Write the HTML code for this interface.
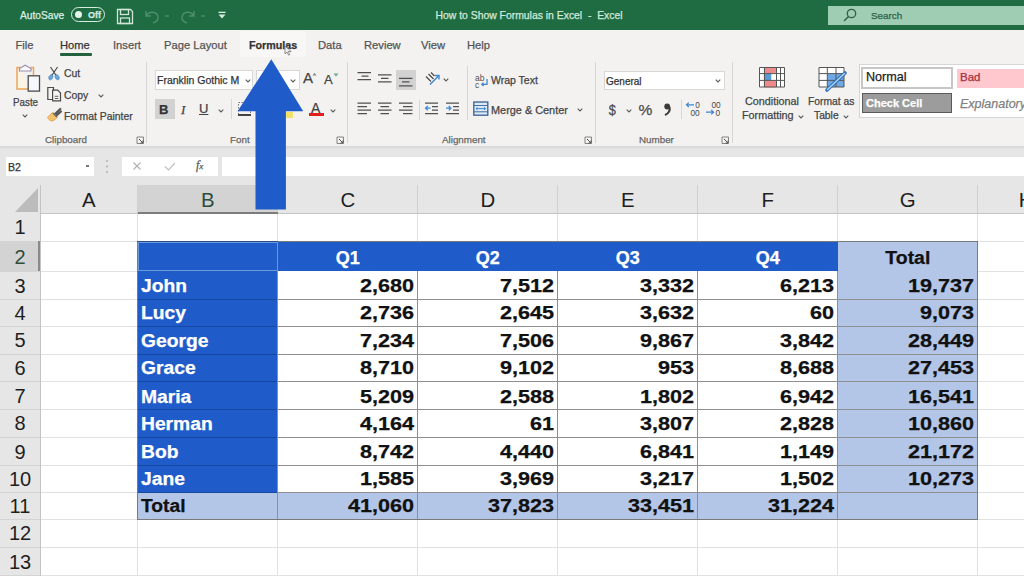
<!DOCTYPE html>
<html><head><meta charset="utf-8"><style>
html,body{margin:0;padding:0;width:1024px;height:576px;overflow:hidden;background:#f3f2f1;font-family:"Liberation Sans",sans-serif}
div,svg{position:absolute;box-sizing:border-box}
.ch{white-space:nowrap}
.d{font-weight:bold;font-size:18px;white-space:nowrap;overflow:hidden}
.d .n{position:absolute;right:3.5px;top:0;display:inline-block;transform:scaleX(1.2);transform-origin:right center}
.tw{display:inline-block;transform:scaleX(1.08)}
.nm{display:inline-block;transform:scaleX(1.07);transform-origin:left center}
.d{-webkit-text-stroke:0.25px currentColor}
.tt,.rt,.tab,.gl{white-space:nowrap;-webkit-text-stroke:0.25px currentColor}
.tab{top:39.1px;font-size:11.2px;color:#555}
.rt{font-size:10.4px;color:#444}
.gl{top:134px;font-size:9.8px;color:#666}
.sep{width:1px;background:#d6d6d6}
.box{background:#fff;border:1px solid #d8d8d8}
</style></head><body>

<!-- title bar -->
<div style="left:0;top:0;width:1024px;height:30px;background:#1f6c42"></div>
<div class="tt" style="left:20px;top:10.2px;font-size:10.2px;color:#dcefe3">AutoSave</div>
<div style="left:71px;top:7.2px;width:33.5px;height:14.8px;border:1.8px solid #d6ece0;border-radius:8px"></div>
<div style="left:74.6px;top:10.8px;width:7.6px;height:7.6px;border-radius:50%;background:#e6f4ea"></div>
<div class="tt" style="left:88px;top:9.6px;font-size:9px;font-weight:bold;color:#d6ece0">Off</div>
<svg style="left:116px;top:8px" width="18" height="17" viewBox="0 0 18 17"><path d="M1.5 1.5h13l2 2v12h-15z" fill="none" stroke="#cfe6d8" stroke-width="1.3"/><rect x="4.5" y="1.5" width="8" height="5" fill="none" stroke="#cfe6d8" stroke-width="1.3"/><rect x="4.5" y="10" width="9" height="5.5" fill="none" stroke="#cfe6d8" stroke-width="1.3"/></svg>
<svg style="left:144px;top:8px" width="66" height="16" viewBox="0 0 66 16"><path d="M2 3v5h5 M2.5 7.5 C5 3 13 3 14 9 C14.5 12 12 14 9 15" fill="none" stroke="#4f8f6b" stroke-width="1.4"/><path d="M21 8h4" stroke="#4f8f6b" stroke-width="1.2"/><path d="M50 3v5h-5 M49.5 7.5 C47 3 39 3 38 9 C37.5 12 40 14 43 15" fill="none" stroke="#4f8f6b" stroke-width="1.4"/><path d="M57 8h4" stroke="#4f8f6b" stroke-width="1.2"/></svg>
<svg style="left:217px;top:11px" width="10" height="9" viewBox="0 0 10 9"><rect x="1.5" y="0.7" width="7" height="1.3" fill="#d6ece0"/><path d="M1.5 3.5h7l-3.5 4z" fill="#d6ece0"/></svg>
<div class="tt" style="left:435.5px;top:9.5px;font-size:10.4px;color:#d2eadb">How to Show Formulas in Excel &nbsp;- &nbsp;Excel</div>
<div style="left:828px;top:5.5px;width:196px;height:19px;background:#9fcdb3"></div>
<svg style="left:842px;top:8px" width="16" height="14" viewBox="0 0 16 14"><circle cx="9.5" cy="5.5" r="4.2" fill="none" stroke="#2f5f44" stroke-width="1.3"/><path d="M6.5 8.5 L2 13" stroke="#2f5f44" stroke-width="1.5"/></svg>
<div class="tt" style="left:871px;top:10.4px;font-size:9.9px;color:#2f5f44">Search</div>
<!-- tabs -->
<div style="left:0;top:30px;width:1024px;height:116px;background:#f3f2f1"></div>
<div class="tab" style="left:15.5px">File</div>
<div class="tab" style="left:60px;color:#333">Home</div>
<div style="left:60px;top:53px;width:32px;height:3px;background:#24613f;border-radius:1px"></div>
<div class="tab" style="left:113px">Insert</div>
<div class="tab" style="left:164px">Page Layout</div>
<div style="left:240px;top:31px;width:66px;height:26px;background:#f8f7f6"></div>
<div class="tab" style="left:249px;font-weight:bold;color:#333;font-size:10.7px;top:38.6px">Formulas</div>
<div class="tab" style="left:318px">Data</div>
<div class="tab" style="left:364px">Review</div>
<div class="tab" style="left:421px">View</div>
<div class="tab" style="left:467px">Help</div>
<!-- ribbon shadow -->
<div style="left:0;top:146px;width:1024px;height:4px;background:linear-gradient(#d6d6d6,#e6e6e6)"></div>

<!-- clipboard group -->
<svg style="left:10px;top:60px" width="34" height="34" viewBox="10 60 34 34"><path d="M20.5 67.5 H17 V89 H28" fill="#fdf3e3" stroke="#e9a75a" stroke-width="1.5"/><path d="M30.5 67.5 H33.5 V75" fill="none" stroke="#e9a75a" stroke-width="1.5"/><path d="M19.5 71 V68.5 L25.2 65.3 L31 68.5 V71 Z" fill="#fbfbfd" stroke="#9d8fb3" stroke-width="1.2"/><rect x="28.2" y="75.8" width="11.3" height="15.3" fill="#f7f8fb" stroke="#4a4a4a" stroke-width="1.3"/></svg>
<div class="rt" style="left:13px;top:96.3px;font-size:11.4px;transform:scaleX(0.86);transform-origin:left center">Paste</div>
<svg class="chev" style="left:22.0px;top:113.5px" width="6" height="4" viewBox="0 0 6 4"><path d="M0.7 0.7l2.3 2.3 2.3-2.3" fill="none" stroke="#5a5a5a" stroke-width="1.1"/></svg>
<svg style="left:46px;top:65px" width="16" height="17" viewBox="46 65 16 17"><path d="M50.5 67 L56.5 76 M57.5 67 L51.5 76" stroke="#4a4a4a" stroke-width="1.2" fill="none"/><path d="M51.5 74.5 C49 75.5 48 78 49.5 79.7 C51 80.3 53 78.5 53 75.8 Z" fill="#6aa5dc" stroke="#4a87c2" stroke-width="0.8"/><path d="M56.5 74.5 C59 75.5 60 78 58.5 79.7 C57 80.3 55 78.5 55 75.8 Z" fill="#6aa5dc" stroke="#4a87c2" stroke-width="0.8"/></svg>
<div class="rt" style="left:64px;top:67.8px">Cut</div>
<svg style="left:46px;top:85px" width="17" height="18" viewBox="46 85 17 18"><path d="M47.8 87.5 H53.5 V99.5 H47.8 Z" fill="none" stroke="#4a4a4a" stroke-width="1.2"/><path d="M52.6 90.2 H57.8 L60.5 93 V100.8 H52.6 Z" fill="#f5f5f5" stroke="#4a4a4a" stroke-width="1.2"/><path d="M54.8 96.3 H58.3 M54.8 98.5 H58.3" stroke="#4a4a4a" stroke-width="0.9"/></svg>
<div class="rt" style="left:64px;top:89.9px">Copy</div>
<svg class="chev" style="left:98.0px;top:93.5px" width="6" height="4" viewBox="0 0 6 4"><path d="M0.7 0.7l2.3 2.3 2.3-2.3" fill="none" stroke="#5a5a5a" stroke-width="1.1"/></svg>
<svg style="left:46px;top:107px" width="17" height="16" viewBox="46 107 17 16"><path d="M55.5 113.5 L60.3 109 M57 115 L61 111.5" stroke="#555" stroke-width="2.2" stroke-linecap="round"/><path d="M52.5 112.5 L57.5 117.3 L52.8 121 C50.5 121 48.2 119.5 47.5 117.3 Z" fill="#f3c36b" stroke="#e3a04a" stroke-width="0.9"/><path d="M53 113 L57 117" stroke="#666" stroke-width="1.6"/></svg>
<div class="rt" style="left:64px;top:111.1px">Format Painter</div>
<div class="gl" style="left:45px">Clipboard</div>
<svg class="dl" style="left:136px;top:136px" width="9" height="9" viewBox="0 0 9 9"><path d="M1 1h6.5v6.5h-6.5z" fill="none" stroke="#777" stroke-width="0.9"/><path d="M3 3l4 4 M4.5 7h2.5v-2.5" fill="none" stroke="#555" stroke-width="1"/></svg>
<div class="sep" style="left:145.5px;top:62px;height:81px"></div>
<!-- font group -->
<div class="box" style="left:154.5px;top:70px;width:98px;height:20px"></div>
<div class="rt" style="left:157px;top:73.8px;font-size:10.5px;color:#333">Franklin Gothic M</div>
<svg class="chev" style="left:245.0px;top:78.5px" width="6" height="4" viewBox="0 0 6 4"><path d="M0.7 0.7l2.3 2.3 2.3-2.3" fill="none" stroke="#5a5a5a" stroke-width="1.1"/></svg>
<div class="box" style="left:255.5px;top:70px;width:44px;height:20px"></div>
<svg class="chev" style="left:290.0px;top:78.5px" width="6" height="4" viewBox="0 0 6 4"><path d="M0.7 0.7l2.3 2.3 2.3-2.3" fill="none" stroke="#5a5a5a" stroke-width="1.1"/></svg>
<div class="rt" style="left:303px;top:69px;font-size:15px;color:#444">A</div>
<svg style="left:312px;top:72px" width="5" height="4" viewBox="0 0 5 4"><path d="M0.5 3.5 L2.5 0.8 L4.5 3.5z" fill="#8a8a8a"/></svg>
<div class="rt" style="left:324px;top:72px;font-size:13px;color:#444">A</div>
<svg style="left:333px;top:73px" width="6" height="4" viewBox="0 0 6 4"><path d="M0.5 0.5 L5.5 0.5 L3 3.5z" fill="#6aa88a"/></svg>
<div style="left:154.5px;top:99px;width:20px;height:20px;background:#d2d2d2"></div>
<div class="rt" style="left:159px;top:102px;font-size:13px;font-weight:bold;color:#333">B</div>
<div class="rt" style="left:181px;top:102px;font-size:13px;font-style:italic;color:#444;font-family:'Liberation Serif',serif">I</div>
<div class="rt" style="left:199px;top:101px;font-size:13px;color:#444;text-decoration:underline">U</div>
<svg class="chev" style="left:218.0px;top:108.5px" width="6" height="4" viewBox="0 0 6 4"><path d="M0.7 0.7l2.3 2.3 2.3-2.3" fill="none" stroke="#5a5a5a" stroke-width="1.1"/></svg>
<div class="sep" style="left:231px;top:99px;height:20px"></div>
<svg style="left:237px;top:101px" width="16" height="16" viewBox="0 0 16 16"><rect x="1.5" y="1.5" width="12" height="12" fill="none" stroke="#777" stroke-width="1" stroke-dasharray="1.5 1.5"/><path d="M1 14h13" stroke="#444" stroke-width="2"/></svg>
<svg style="left:286px;top:112px" width="7" height="6"><rect x="0" y="0" width="7" height="6" fill="#f2e26a"/></svg>
<div class="rt" style="left:311px;top:100px;font-size:14px;color:#444">A</div>
<div style="left:309px;top:113px;width:15px;height:3px;background:#e0201a"></div>
<svg class="chev" style="left:330.0px;top:108.5px" width="6" height="4" viewBox="0 0 6 4"><path d="M0.7 0.7l2.3 2.3 2.3-2.3" fill="none" stroke="#5a5a5a" stroke-width="1.1"/></svg>
<div class="gl" style="left:230px">Font</div>
<svg class="dl" style="left:336px;top:136px" width="9" height="9" viewBox="0 0 9 9"><path d="M1 1h6.5v6.5h-6.5z" fill="none" stroke="#777" stroke-width="0.9"/><path d="M3 3l4 4 M4.5 7h2.5v-2.5" fill="none" stroke="#555" stroke-width="1"/></svg>
<div class="sep" style="left:347px;top:62px;height:81px"></div>
<!-- alignment group -->
<div style="left:395.7px;top:69.6px;width:20px;height:20px;background:#d2d2d2"></div>
<svg style="left:350px;top:62px" width="145" height="60" viewBox="350 62 145 60"><g stroke="#505050" stroke-width="1.25" fill="none">
<path d="M357.5 72.6h13.5 M361.5 76.1h7 M357.5 79.6h13.5"/>
<path d="M378 74.9h13.5 M381 78.4h7.5 M378 81.9h13.5"/>
<path d="M399 78.4h13.5 M402 81.9h7.5 M399 85.9h13.5"/>
<path d="M357.5 103h13.5 M357.5 106.5h9.5 M357.5 110h13.5 M357.5 113.5h9.5"/>
<path d="M378 103h13.5 M380.5 106.5h8.5 M378 110h13.5 M380.5 113.5h8.5"/>
<path d="M399 103h13.5 M403 106.5h9.5 M399 110h13.5 M403 113.5h9.5"/>
<path d="M425 103h13 M432 106.5h6 M432 110h6 M425 113.5h13"/>
<path d="M446 103h13 M453 106.5h6 M453 110h6 M446 113.5h13"/>
<path d="M426 76.5 L431 81.5 M428.5 74 L433.5 79 M431 72.5 L434.5 76" stroke-width="1.3"/>
</g>
<path d="M430.5 108.2h-5 M427.8 106l-2.3 2.2 2.3 2.2" stroke="#3d86d2" stroke-width="1.2" fill="none"/>
<path d="M446 108.2h5 M448.7 106l2.3 2.2 -2.3 2.2" stroke="#3d86d2" stroke-width="1.2" fill="none"/>
<path d="M430 84.5 L438.5 76 M435 75.5h4v4" stroke="#3d86d2" stroke-width="1.4" fill="none"/>
<text x="475" y="80.5" font-size="8.5" font-family="Liberation Sans" fill="#505050">ab</text><text x="475" y="88" font-size="8.5" font-family="Liberation Sans" fill="#505050">c</text><path d="M487 79v5.3h-5 M483.6 82.6l-1.8 1.7 1.8 1.7" stroke="#3d86d2" stroke-width="1.3" fill="none"/>
<rect x="473.8" y="102" width="14" height="13.2" fill="#dbe9f8" stroke="#3a5f94" stroke-width="1.3"/>
<path d="M473.8 105.5h14 M473.8 111.8h14" stroke="#3a5f94" stroke-width="0.9"/>
<path d="M476 108.6h9.5 M484 107.3l1.5 1.3-1.5 1.3 M477.5 107.3l-1.5 1.3 1.5 1.3" stroke="#3d86d2" stroke-width="1" fill="none"/>
</svg>
<div class="sep" style="left:419px;top:99.5px;height:20px"></div>
<svg class="chev" style="left:443.0px;top:77.5px" width="6" height="4" viewBox="0 0 6 4"><path d="M0.7 0.7l2.3 2.3 2.3-2.3" fill="none" stroke="#5a5a5a" stroke-width="1.1"/></svg>
<div class="sep" style="left:466.5px;top:66px;height:54px"></div>
<div class="rt" style="left:491px;top:74.2px;font-size:10.5px">Wrap Text</div>

<div class="rt" style="left:491px;top:103.5px;font-size:10.9px">Merge &amp; Center</div>
<svg class="chev" style="left:577.0px;top:107.5px" width="6" height="4" viewBox="0 0 6 4"><path d="M0.7 0.7l2.3 2.3 2.3-2.3" fill="none" stroke="#5a5a5a" stroke-width="1.1"/></svg>
<div class="gl" style="left:442px">Alignment</div>
<svg class="dl" style="left:584px;top:136px" width="9" height="9" viewBox="0 0 9 9"><path d="M1 1h6.5v6.5h-6.5z" fill="none" stroke="#777" stroke-width="0.9"/><path d="M3 3l4 4 M4.5 7h2.5v-2.5" fill="none" stroke="#555" stroke-width="1"/></svg>
<div class="sep" style="left:595px;top:62px;height:81px"></div>
<!-- number group -->
<div class="box" style="left:603.5px;top:70.5px;width:121px;height:19px"></div>
<div class="rt" style="left:606px;top:76px;font-size:10px;color:#333">General</div>
<svg class="chev" style="left:715.0px;top:78.5px" width="6" height="4" viewBox="0 0 6 4"><path d="M0.7 0.7l2.3 2.3 2.3-2.3" fill="none" stroke="#5a5a5a" stroke-width="1.1"/></svg>
<div class="rt" style="left:607.5px;top:101px;font-size:15px;color:#4a4a4a;transform:scaleX(0.85)">$</div>
<svg class="chev" style="left:626.0px;top:108.5px" width="6" height="4" viewBox="0 0 6 4"><path d="M0.7 0.7l2.3 2.3 2.3-2.3" fill="none" stroke="#5a5a5a" stroke-width="1.1"/></svg>
<div class="rt" style="left:638.5px;top:101px;font-size:15.5px;color:#4a4a4a">%</div>
<svg style="left:662px;top:102px" width="10" height="14" viewBox="662 102 10 14"><circle cx="667.2" cy="106.5" r="2.9" fill="#3a3a3a"/><path d="M669.6 107 C670.3 110.5 668.5 113.5 665 115" stroke="#3a3a3a" stroke-width="2" fill="none"/></svg>
<div class="sep" style="left:681px;top:100px;height:19px"></div>
<svg style="left:684px;top:100px" width="19" height="17" viewBox="684 100 19 17"><text x="695.2" y="108.2" font-size="8.3" font-family="Liberation Sans" fill="#4a4a4a">0</text><text x="690.5" y="115.6" font-size="8.3" font-family="Liberation Sans" fill="#4a4a4a">00</text><path d="M694 104.8h-7.5 M688.8 102.6l-2.3 2.2 2.3 2.2" stroke="#3d86d2" stroke-width="1.2" fill="none"/></svg>
<svg style="left:704px;top:100px" width="19" height="17" viewBox="704 100 19 17"><text x="711.5" y="108.2" font-size="8.3" font-family="Liberation Sans" fill="#4a4a4a">00</text><text x="715.5" y="115.6" font-size="8.3" font-family="Liberation Sans" fill="#4a4a4a">0</text><path d="M706 112.2h7.5 M711.2 110l2.3 2.2 -2.3 2.2" stroke="#3d86d2" stroke-width="1.2" fill="none"/></svg>
<div class="gl" style="left:639px">Number</div>
<svg class="dl" style="left:721px;top:136px" width="9" height="9" viewBox="0 0 9 9"><path d="M1 1h6.5v6.5h-6.5z" fill="none" stroke="#777" stroke-width="0.9"/><path d="M3 3l4 4 M4.5 7h2.5v-2.5" fill="none" stroke="#555" stroke-width="1"/></svg>
<div class="sep" style="left:731.5px;top:62px;height:81px"></div>
<!-- styles group -->
<svg style="left:758px;top:66px" width="28" height="23" viewBox="758 66 28 23"><rect x="764.5" y="67" width="12" height="6.4" fill="#ef8a8a"/><rect x="764.5" y="80.4" width="12" height="7" fill="#ef8a8a"/><rect x="764.5" y="73.4" width="7" height="7" fill="#5b9bd5"/><rect x="771.5" y="73.4" width="5" height="7" fill="#fff"/><rect x="759.5" y="67.5" width="3" height="19.5" fill="#fff"/><rect x="777" y="67.5" width="7" height="19.5" fill="#fff"/><path d="M759.5 67.5h25v19.5h-25z M759.5 73.6h25 M759.5 80.4h25 M764.5 67.5v19.5 M776.5 67.5v19.5 M780.5 67.5v19.5" fill="none" stroke="#555" stroke-width="1"/></svg>
<div class="rt" style="left:745px;top:95.1px;font-size:10.8px">Conditional</div>
<div class="rt" style="left:742px;top:109.2px;font-size:10.8px">Formatting</div>
<svg class="chev" style="left:798px;top:114.5px" width="6" height="4" viewBox="0 0 6 4"><path d="M0.7 0.7l2.3 2.3 2.3-2.3" fill="none" stroke="#5a5a5a" stroke-width="1.1"/></svg>
<svg style="left:816px;top:65px" width="32" height="28" viewBox="816 65 32 28"><rect x="819" y="67.5" width="25" height="19.5" fill="#fff"/><rect x="827.3" y="73.6" width="16.7" height="13.4" fill="#6fa8e6"/><path d="M819 67.5h25v19.5h-25z M819 73.6h25 M819 80.4h25 M827.3 67.5v19.5 M836 67.5v19.5" fill="none" stroke="#555" stroke-width="1"/><path d="M827 90 L845 73" stroke="#2f6fb8" stroke-width="3.6" stroke-linecap="round"/><path d="M827.5 89.5 L844.5 73.5" stroke="#a9d3f5" stroke-width="1.6" stroke-linecap="round"/></svg>
<div class="rt" style="left:808px;top:96.1px;font-size:10.3px">Format as</div>
<div class="rt" style="left:814px;top:110.4px;font-size:10.3px">Table</div>
<svg class="chev" style="left:843px;top:114.5px" width="6" height="4" viewBox="0 0 6 4"><path d="M0.7 0.7l2.3 2.3 2.3-2.3" fill="none" stroke="#5a5a5a" stroke-width="1.1"/></svg>
<div style="left:859px;top:64px;width:170px;height:54px;background:#fff;border:1px solid #d6d6d6"></div>
<div style="left:861px;top:67px;width:92px;height:22px;background:#fff;border:2px solid #c6c6c6"></div>
<div class="rt" style="left:866px;top:70.2px;font-size:12.6px;color:#222">Normal</div>
<div style="left:956.5px;top:68.5px;width:70px;height:19.5px;background:#ffc7ce"></div>
<div class="rt" style="left:960px;top:71px;font-size:11.5px;color:#a3303c">Bad</div>
<div style="left:862px;top:93px;width:90px;height:20px;background:#9c9c9c;border:1.5px solid #5a5a5a"></div>
<div class="rt" style="left:866px;top:97px;font-size:11px;font-weight:bold;color:#fff">Check Cell</div>
<div class="rt" style="left:960px;top:96.5px;font-size:12.5px;font-style:italic;color:#808080">Explanatory</div>
<!-- formula bar -->
<div style="left:0;top:150px;width:1024px;height:35px;background:#e6e6e6"></div>
<div style="left:5.5px;top:157px;width:88px;height:19px;background:#fff"></div>
<div class="rt" style="left:8px;top:161.1px;font-size:10.6px;color:#333">B2</div>
<div style="left:86px;top:165px;width:3px;height:2px;background:#777"></div>
<svg style="left:105px;top:159px" width="4" height="15"><circle cx="2" cy="2" r="0.9" fill="#aaa"/><circle cx="2" cy="7.5" r="0.9" fill="#aaa"/><circle cx="2" cy="13" r="0.9" fill="#aaa"/></svg>
<div style="left:122px;top:157.3px;width:96px;height:18.5px;background:#fff"></div>
<svg style="left:131px;top:160px" width="12" height="12" viewBox="0 0 12 12"><path d="M2.5 2.5l7 7 M9.5 2.5l-7 7" stroke="#b0b0b0" stroke-width="1.1"/></svg>
<svg style="left:163px;top:160px" width="14" height="12" viewBox="0 0 14 12"><path d="M2 6.5l3.5 3.5 6.5-7" fill="none" stroke="#c0c0c0" stroke-width="1.2"/></svg>
<div class="rt" style="left:196px;top:158px;font-size:12px;font-style:italic;color:#555;font-family:'Liberation Serif',serif">f<span style="font-size:9px">x</span></div>
<div style="left:222.3px;top:157.3px;width:802px;height:18.5px;background:#fff"></div>
<div style="left:40px;top:213.3px;width:984px;height:362.7px;background:#fff"></div>
<div style="left:137.3px;top:213px;width:1px;height:363px;background:#e1e1e1"></div>
<div style="left:277.3px;top:213px;width:1px;height:363px;background:#e1e1e1"></div>
<div style="left:417.3px;top:213px;width:1px;height:363px;background:#e1e1e1"></div>
<div style="left:557.3px;top:213px;width:1px;height:363px;background:#e1e1e1"></div>
<div style="left:697.3px;top:213px;width:1px;height:363px;background:#e1e1e1"></div>
<div style="left:837.3px;top:213px;width:1px;height:363px;background:#e1e1e1"></div>
<div style="left:977.3px;top:213px;width:1px;height:363px;background:#e1e1e1"></div>
<div style="left:40px;top:240.5px;width:984px;height:1px;background:#e1e1e1"></div>
<div style="left:40px;top:270.5px;width:984px;height:1px;background:#e1e1e1"></div>
<div style="left:40px;top:298.5px;width:984px;height:1px;background:#e1e1e1"></div>
<div style="left:40px;top:326.0px;width:984px;height:1px;background:#e1e1e1"></div>
<div style="left:40px;top:353.5px;width:984px;height:1px;background:#e1e1e1"></div>
<div style="left:40px;top:381.0px;width:984px;height:1px;background:#e1e1e1"></div>
<div style="left:40px;top:409.0px;width:984px;height:1px;background:#e1e1e1"></div>
<div style="left:40px;top:436.5px;width:984px;height:1px;background:#e1e1e1"></div>
<div style="left:40px;top:464.5px;width:984px;height:1px;background:#e1e1e1"></div>
<div style="left:40px;top:491.5px;width:984px;height:1px;background:#e1e1e1"></div>
<div style="left:40px;top:519.0px;width:984px;height:1px;background:#e1e1e1"></div>
<div style="left:40px;top:546.5px;width:984px;height:1px;background:#e1e1e1"></div>
<div style="left:40px;top:574.5px;width:984px;height:1px;background:#e1e1e1"></div>
<div style="left:0px;top:180px;width:1024px;height:33.30000000000001px;background:#e6e6e6"></div>
<div style="left:137.8px;top:185px;width:140.0px;height:28.30000000000001px;background:#d3d3d3"></div>
<div class="ch" style="left:40px;top:186.3px;width:97.80000000000001px;height:28.0px;line-height:28px;text-align:center;font-size:20.4px;color:#1e1e1e">A</div>
<div class="ch" style="left:137.8px;top:186.3px;width:140.0px;height:28.0px;line-height:28px;text-align:center;font-size:20.4px;color:#2c4e3a">B</div>
<div class="ch" style="left:277.8px;top:186.3px;width:140.0px;height:28.0px;line-height:28px;text-align:center;font-size:20.4px;color:#1e1e1e">C</div>
<div class="ch" style="left:417.8px;top:186.3px;width:139.99999999999994px;height:28.0px;line-height:28px;text-align:center;font-size:20.4px;color:#1e1e1e">D</div>
<div class="ch" style="left:557.8px;top:186.3px;width:140.0px;height:28.0px;line-height:28px;text-align:center;font-size:20.4px;color:#1e1e1e">E</div>
<div class="ch" style="left:697.8px;top:186.3px;width:140.0px;height:28.0px;line-height:28px;text-align:center;font-size:20.4px;color:#1e1e1e">F</div>
<div class="ch" style="left:837.8px;top:186.3px;width:140.0px;height:28.0px;line-height:28px;text-align:center;font-size:20.4px;color:#1e1e1e">G</div>
<div class="ch" style="left:1018.8px;top:186.3px;width:31.200000000000045px;height:28.0px;line-height:28px;font-size:20.4px;color:#1e1e1e">H</div>
<div style="left:137.3px;top:185px;width:1px;height:28px;background:#d0d0d0"></div>
<div style="left:277.3px;top:185px;width:1px;height:28px;background:#d0d0d0"></div>
<div style="left:417.3px;top:185px;width:1px;height:28px;background:#d0d0d0"></div>
<div style="left:557.3px;top:185px;width:1px;height:28px;background:#d0d0d0"></div>
<div style="left:697.3px;top:185px;width:1px;height:28px;background:#d0d0d0"></div>
<div style="left:837.3px;top:185px;width:1px;height:28px;background:#d0d0d0"></div>
<div style="left:977.3px;top:185px;width:1px;height:28px;background:#d0d0d0"></div>
<div style="left:0;top:212.6px;width:1024px;height:1px;background:#c4c4c4"></div>
<div style="left:137.8px;top:212.2px;width:140px;height:2px;background:#7c7c7c"></div>
<div style="left:0px;top:213.3px;width:40px;height:362.7px;background:#e6e6e6"></div>
<div style="left:0px;top:241px;width:40px;height:30px;background:#d3d3d3"></div>
<div class="ch" style="left:0px;top:213.9px;width:40px;height:27.69999999999999px;line-height:27.69999999999999px;text-align:center;font-size:20px;color:#1e1e1e">1</div>
<div class="ch" style="left:0px;top:241.6px;width:40px;height:30.00000000000003px;line-height:30px;text-align:center;font-size:20px;color:#2c4e3a">2</div>
<div class="ch" style="left:0px;top:271.6px;width:40px;height:28.0px;line-height:28px;text-align:center;font-size:20px;color:#1e1e1e">3</div>
<div class="ch" style="left:0px;top:299.6px;width:40px;height:27.5px;line-height:27.5px;text-align:center;font-size:20px;color:#1e1e1e">4</div>
<div class="ch" style="left:0px;top:327.1px;width:40px;height:27.5px;line-height:27.5px;text-align:center;font-size:20px;color:#1e1e1e">5</div>
<div class="ch" style="left:0px;top:354.6px;width:40px;height:27.5px;line-height:27.5px;text-align:center;font-size:20px;color:#1e1e1e">6</div>
<div class="ch" style="left:0px;top:382.1px;width:40px;height:28.0px;line-height:28.0px;text-align:center;font-size:20px;color:#1e1e1e">7</div>
<div class="ch" style="left:0px;top:410.1px;width:40px;height:27.5px;line-height:27.5px;text-align:center;font-size:20px;color:#1e1e1e">8</div>
<div class="ch" style="left:0px;top:437.6px;width:40px;height:28.0px;line-height:28px;text-align:center;font-size:20px;color:#1e1e1e">9</div>
<div class="ch" style="left:0px;top:465.6px;width:40px;height:27.0px;line-height:27px;text-align:center;font-size:20px;color:#1e1e1e">10</div>
<div class="ch" style="left:0px;top:492.6px;width:40px;height:27.5px;line-height:27.5px;text-align:center;font-size:20px;color:#1e1e1e">11</div>
<div class="ch" style="left:0px;top:520.1px;width:40px;height:27.5px;line-height:27.5px;text-align:center;font-size:20px;color:#1e1e1e">12</div>
<div class="ch" style="left:0px;top:547.6px;width:40px;height:28.0px;line-height:28px;text-align:center;font-size:20px;color:#1e1e1e">13</div>
<div style="left:0;top:240.5px;width:40px;height:1px;background:#d4d4d4"></div>
<div style="left:0;top:270.5px;width:40px;height:1px;background:#d4d4d4"></div>
<div style="left:0;top:298.5px;width:40px;height:1px;background:#d4d4d4"></div>
<div style="left:0;top:326.0px;width:40px;height:1px;background:#d4d4d4"></div>
<div style="left:0;top:353.5px;width:40px;height:1px;background:#d4d4d4"></div>
<div style="left:0;top:381.0px;width:40px;height:1px;background:#d4d4d4"></div>
<div style="left:0;top:409.0px;width:40px;height:1px;background:#d4d4d4"></div>
<div style="left:0;top:436.5px;width:40px;height:1px;background:#d4d4d4"></div>
<div style="left:0;top:464.5px;width:40px;height:1px;background:#d4d4d4"></div>
<div style="left:0;top:491.5px;width:40px;height:1px;background:#d4d4d4"></div>
<div style="left:0;top:519.0px;width:40px;height:1px;background:#d4d4d4"></div>
<div style="left:0;top:546.5px;width:40px;height:1px;background:#d4d4d4"></div>
<div style="left:0;top:574.5px;width:40px;height:1px;background:#d4d4d4"></div>
<div style="left:39.5px;top:185px;width:1px;height:391px;background:#c4c4c4"></div>
<div style="left:38.3px;top:241px;width:2px;height:30px;background:#8a8a8a"></div>
<svg style="position:absolute;left:0;top:185px" width="40" height="28"><polygon points="15,27 38,27 38,3" fill="#bcbcbc"/></svg>
<div style="left:137.8px;top:241px;width:700.0px;height:30px;background:#1f5cc9"></div>
<div style="left:837.8px;top:241px;width:140.0px;height:30px;background:#b4c6e7"></div>
<div class="d" style="left:277.8px;top:243px;width:140.0px;height:30px;line-height:30px;text-align:center;color:#fff">Q1</div>
<div class="d" style="left:417.8px;top:243px;width:139.99999999999994px;height:30px;line-height:30px;text-align:center;color:#fff">Q2</div>
<div class="d" style="left:557.8px;top:243px;width:140.0px;height:30px;line-height:30px;text-align:center;color:#fff">Q3</div>
<div class="d" style="left:697.8px;top:243px;width:140.0px;height:30px;line-height:30px;text-align:center;color:#fff">Q4</div>
<div class="d" style="left:837.8px;top:243.3px;width:140.0px;height:30.0px;line-height:30px;text-align:center;color:#111"><span class="tw">Total</span></div>
<div style="left:137.8px;top:271px;width:140.0px;height:28px;background:#1f5cc9"></div>
<div class="d" style="left:137.8px;top:272px;width:140.0px;height:28px;line-height:28px;padding-left:3px;color:#fff"><span class="nm">John</span></div>
<div style="left:277.8px;top:271px;width:140.0px;height:28px;background:#fff"></div>
<div class="d" style="left:277.8px;top:272px;width:140.0px;height:28px;line-height:28px;text-align:right;color:#111"><span class="n">2,680</span></div>
<div style="left:417.8px;top:271px;width:139.99999999999994px;height:28px;background:#fff"></div>
<div class="d" style="left:417.8px;top:272px;width:139.99999999999994px;height:28px;line-height:28px;text-align:right;color:#111"><span class="n">7,512</span></div>
<div style="left:557.8px;top:271px;width:140.0px;height:28px;background:#fff"></div>
<div class="d" style="left:557.8px;top:272px;width:140.0px;height:28px;line-height:28px;text-align:right;color:#111"><span class="n">3,332</span></div>
<div style="left:697.8px;top:271px;width:140.0px;height:28px;background:#fff"></div>
<div class="d" style="left:697.8px;top:272px;width:140.0px;height:28px;line-height:28px;text-align:right;color:#111"><span class="n">6,213</span></div>
<div style="left:837.8px;top:271px;width:140.0px;height:28px;background:#b4c6e7"></div>
<div class="d" style="left:837.8px;top:272px;width:140.0px;height:28px;line-height:28px;text-align:right;color:#111"><span class="n">19,737</span></div>
<div style="left:137.8px;top:299px;width:140.0px;height:27.5px;background:#1f5cc9"></div>
<div class="d" style="left:137.8px;top:300px;width:140.0px;height:27.5px;line-height:27.5px;padding-left:3px;color:#fff"><span class="nm">Lucy</span></div>
<div style="left:277.8px;top:299px;width:140.0px;height:27.5px;background:#fff"></div>
<div class="d" style="left:277.8px;top:300px;width:140.0px;height:27.5px;line-height:27.5px;text-align:right;color:#111"><span class="n">2,736</span></div>
<div style="left:417.8px;top:299px;width:139.99999999999994px;height:27.5px;background:#fff"></div>
<div class="d" style="left:417.8px;top:300px;width:139.99999999999994px;height:27.5px;line-height:27.5px;text-align:right;color:#111"><span class="n">2,645</span></div>
<div style="left:557.8px;top:299px;width:140.0px;height:27.5px;background:#fff"></div>
<div class="d" style="left:557.8px;top:300px;width:140.0px;height:27.5px;line-height:27.5px;text-align:right;color:#111"><span class="n">3,632</span></div>
<div style="left:697.8px;top:299px;width:140.0px;height:27.5px;background:#fff"></div>
<div class="d" style="left:697.8px;top:300px;width:140.0px;height:27.5px;line-height:27.5px;text-align:right;color:#111"><span class="n">60</span></div>
<div style="left:837.8px;top:299px;width:140.0px;height:27.5px;background:#b4c6e7"></div>
<div class="d" style="left:837.8px;top:300px;width:140.0px;height:27.5px;line-height:27.5px;text-align:right;color:#111"><span class="n">9,073</span></div>
<div style="left:137.8px;top:326.5px;width:140.0px;height:27.5px;background:#1f5cc9"></div>
<div class="d" style="left:137.8px;top:327.5px;width:140.0px;height:27.5px;line-height:27.5px;padding-left:3px;color:#fff"><span class="nm">George</span></div>
<div style="left:277.8px;top:326.5px;width:140.0px;height:27.5px;background:#fff"></div>
<div class="d" style="left:277.8px;top:327.5px;width:140.0px;height:27.5px;line-height:27.5px;text-align:right;color:#111"><span class="n">7,234</span></div>
<div style="left:417.8px;top:326.5px;width:139.99999999999994px;height:27.5px;background:#fff"></div>
<div class="d" style="left:417.8px;top:327.5px;width:139.99999999999994px;height:27.5px;line-height:27.5px;text-align:right;color:#111"><span class="n">7,506</span></div>
<div style="left:557.8px;top:326.5px;width:140.0px;height:27.5px;background:#fff"></div>
<div class="d" style="left:557.8px;top:327.5px;width:140.0px;height:27.5px;line-height:27.5px;text-align:right;color:#111"><span class="n">9,867</span></div>
<div style="left:697.8px;top:326.5px;width:140.0px;height:27.5px;background:#fff"></div>
<div class="d" style="left:697.8px;top:327.5px;width:140.0px;height:27.5px;line-height:27.5px;text-align:right;color:#111"><span class="n">3,842</span></div>
<div style="left:837.8px;top:326.5px;width:140.0px;height:27.5px;background:#b4c6e7"></div>
<div class="d" style="left:837.8px;top:327.5px;width:140.0px;height:27.5px;line-height:27.5px;text-align:right;color:#111"><span class="n">28,449</span></div>
<div style="left:137.8px;top:354px;width:140.0px;height:27.5px;background:#1f5cc9"></div>
<div class="d" style="left:137.8px;top:355px;width:140.0px;height:27.5px;line-height:27.5px;padding-left:3px;color:#fff"><span class="nm">Grace</span></div>
<div style="left:277.8px;top:354px;width:140.0px;height:27.5px;background:#fff"></div>
<div class="d" style="left:277.8px;top:355px;width:140.0px;height:27.5px;line-height:27.5px;text-align:right;color:#111"><span class="n">8,710</span></div>
<div style="left:417.8px;top:354px;width:139.99999999999994px;height:27.5px;background:#fff"></div>
<div class="d" style="left:417.8px;top:355px;width:139.99999999999994px;height:27.5px;line-height:27.5px;text-align:right;color:#111"><span class="n">9,102</span></div>
<div style="left:557.8px;top:354px;width:140.0px;height:27.5px;background:#fff"></div>
<div class="d" style="left:557.8px;top:355px;width:140.0px;height:27.5px;line-height:27.5px;text-align:right;color:#111"><span class="n">953</span></div>
<div style="left:697.8px;top:354px;width:140.0px;height:27.5px;background:#fff"></div>
<div class="d" style="left:697.8px;top:355px;width:140.0px;height:27.5px;line-height:27.5px;text-align:right;color:#111"><span class="n">8,688</span></div>
<div style="left:837.8px;top:354px;width:140.0px;height:27.5px;background:#b4c6e7"></div>
<div class="d" style="left:837.8px;top:355px;width:140.0px;height:27.5px;line-height:27.5px;text-align:right;color:#111"><span class="n">27,453</span></div>
<div style="left:137.8px;top:381.5px;width:140.0px;height:28.0px;background:#1f5cc9"></div>
<div class="d" style="left:137.8px;top:382.5px;width:140.0px;height:28.0px;line-height:28.0px;padding-left:3px;color:#fff"><span class="nm">Maria</span></div>
<div style="left:277.8px;top:381.5px;width:140.0px;height:28.0px;background:#fff"></div>
<div class="d" style="left:277.8px;top:382.5px;width:140.0px;height:28.0px;line-height:28.0px;text-align:right;color:#111"><span class="n">5,209</span></div>
<div style="left:417.8px;top:381.5px;width:139.99999999999994px;height:28.0px;background:#fff"></div>
<div class="d" style="left:417.8px;top:382.5px;width:139.99999999999994px;height:28.0px;line-height:28.0px;text-align:right;color:#111"><span class="n">2,588</span></div>
<div style="left:557.8px;top:381.5px;width:140.0px;height:28.0px;background:#fff"></div>
<div class="d" style="left:557.8px;top:382.5px;width:140.0px;height:28.0px;line-height:28.0px;text-align:right;color:#111"><span class="n">1,802</span></div>
<div style="left:697.8px;top:381.5px;width:140.0px;height:28.0px;background:#fff"></div>
<div class="d" style="left:697.8px;top:382.5px;width:140.0px;height:28.0px;line-height:28.0px;text-align:right;color:#111"><span class="n">6,942</span></div>
<div style="left:837.8px;top:381.5px;width:140.0px;height:28.0px;background:#b4c6e7"></div>
<div class="d" style="left:837.8px;top:382.5px;width:140.0px;height:28.0px;line-height:28.0px;text-align:right;color:#111"><span class="n">16,541</span></div>
<div style="left:137.8px;top:409.5px;width:140.0px;height:27.5px;background:#1f5cc9"></div>
<div class="d" style="left:137.8px;top:410.5px;width:140.0px;height:27.5px;line-height:27.5px;padding-left:3px;color:#fff"><span class="nm">Herman</span></div>
<div style="left:277.8px;top:409.5px;width:140.0px;height:27.5px;background:#fff"></div>
<div class="d" style="left:277.8px;top:410.5px;width:140.0px;height:27.5px;line-height:27.5px;text-align:right;color:#111"><span class="n">4,164</span></div>
<div style="left:417.8px;top:409.5px;width:139.99999999999994px;height:27.5px;background:#fff"></div>
<div class="d" style="left:417.8px;top:410.5px;width:139.99999999999994px;height:27.5px;line-height:27.5px;text-align:right;color:#111"><span class="n">61</span></div>
<div style="left:557.8px;top:409.5px;width:140.0px;height:27.5px;background:#fff"></div>
<div class="d" style="left:557.8px;top:410.5px;width:140.0px;height:27.5px;line-height:27.5px;text-align:right;color:#111"><span class="n">3,807</span></div>
<div style="left:697.8px;top:409.5px;width:140.0px;height:27.5px;background:#fff"></div>
<div class="d" style="left:697.8px;top:410.5px;width:140.0px;height:27.5px;line-height:27.5px;text-align:right;color:#111"><span class="n">2,828</span></div>
<div style="left:837.8px;top:409.5px;width:140.0px;height:27.5px;background:#b4c6e7"></div>
<div class="d" style="left:837.8px;top:410.5px;width:140.0px;height:27.5px;line-height:27.5px;text-align:right;color:#111"><span class="n">10,860</span></div>
<div style="left:137.8px;top:437px;width:140.0px;height:28px;background:#1f5cc9"></div>
<div class="d" style="left:137.8px;top:438px;width:140.0px;height:28px;line-height:28px;padding-left:3px;color:#fff"><span class="nm">Bob</span></div>
<div style="left:277.8px;top:437px;width:140.0px;height:28px;background:#fff"></div>
<div class="d" style="left:277.8px;top:438px;width:140.0px;height:28px;line-height:28px;text-align:right;color:#111"><span class="n">8,742</span></div>
<div style="left:417.8px;top:437px;width:139.99999999999994px;height:28px;background:#fff"></div>
<div class="d" style="left:417.8px;top:438px;width:139.99999999999994px;height:28px;line-height:28px;text-align:right;color:#111"><span class="n">4,440</span></div>
<div style="left:557.8px;top:437px;width:140.0px;height:28px;background:#fff"></div>
<div class="d" style="left:557.8px;top:438px;width:140.0px;height:28px;line-height:28px;text-align:right;color:#111"><span class="n">6,841</span></div>
<div style="left:697.8px;top:437px;width:140.0px;height:28px;background:#fff"></div>
<div class="d" style="left:697.8px;top:438px;width:140.0px;height:28px;line-height:28px;text-align:right;color:#111"><span class="n">1,149</span></div>
<div style="left:837.8px;top:437px;width:140.0px;height:28px;background:#b4c6e7"></div>
<div class="d" style="left:837.8px;top:438px;width:140.0px;height:28px;line-height:28px;text-align:right;color:#111"><span class="n">21,172</span></div>
<div style="left:137.8px;top:465px;width:140.0px;height:27px;background:#1f5cc9"></div>
<div class="d" style="left:137.8px;top:466px;width:140.0px;height:27px;line-height:27px;padding-left:3px;color:#fff"><span class="nm">Jane</span></div>
<div style="left:277.8px;top:465px;width:140.0px;height:27px;background:#fff"></div>
<div class="d" style="left:277.8px;top:466px;width:140.0px;height:27px;line-height:27px;text-align:right;color:#111"><span class="n">1,585</span></div>
<div style="left:417.8px;top:465px;width:139.99999999999994px;height:27px;background:#fff"></div>
<div class="d" style="left:417.8px;top:466px;width:139.99999999999994px;height:27px;line-height:27px;text-align:right;color:#111"><span class="n">3,969</span></div>
<div style="left:557.8px;top:465px;width:140.0px;height:27px;background:#fff"></div>
<div class="d" style="left:557.8px;top:466px;width:140.0px;height:27px;line-height:27px;text-align:right;color:#111"><span class="n">3,217</span></div>
<div style="left:697.8px;top:465px;width:140.0px;height:27px;background:#fff"></div>
<div class="d" style="left:697.8px;top:466px;width:140.0px;height:27px;line-height:27px;text-align:right;color:#111"><span class="n">1,502</span></div>
<div style="left:837.8px;top:465px;width:140.0px;height:27px;background:#b4c6e7"></div>
<div class="d" style="left:837.8px;top:466px;width:140.0px;height:27px;line-height:27px;text-align:right;color:#111"><span class="n">10,273</span></div>
<div style="left:137.8px;top:492px;width:140.0px;height:27.5px;background:#b4c6e7"></div>
<div class="d" style="left:137.8px;top:493px;width:140.0px;height:27.5px;line-height:27.5px;padding-left:3px;color:#111"><span class="nm">Total</span></div>
<div style="left:277.8px;top:492px;width:140.0px;height:27.5px;background:#b4c6e7"></div>
<div class="d" style="left:277.8px;top:493px;width:140.0px;height:27.5px;line-height:27.5px;text-align:right;color:#111"><span class="n">41,060</span></div>
<div style="left:417.8px;top:492px;width:139.99999999999994px;height:27.5px;background:#b4c6e7"></div>
<div class="d" style="left:417.8px;top:493px;width:139.99999999999994px;height:27.5px;line-height:27.5px;text-align:right;color:#111"><span class="n">37,823</span></div>
<div style="left:557.8px;top:492px;width:140.0px;height:27.5px;background:#b4c6e7"></div>
<div class="d" style="left:557.8px;top:493px;width:140.0px;height:27.5px;line-height:27.5px;text-align:right;color:#111"><span class="n">33,451</span></div>
<div style="left:697.8px;top:492px;width:140.0px;height:27.5px;background:#b4c6e7"></div>
<div class="d" style="left:697.8px;top:493px;width:140.0px;height:27.5px;line-height:27.5px;text-align:right;color:#111"><span class="n">31,224</span></div>
<div style="left:837.8px;top:492px;width:140.0px;height:27.5px;background:#b4c6e7"></div>
<div class="d" style="left:837.8px;top:493px;width:140.0px;height:27.5px;line-height:27.5px;text-align:right;color:#111"><span class="n"></span></div>
<div style="left:277.8px;top:298.5px;width:700px;height:1px;background:#8f8f8f"></div>
<div style="left:137.8px;top:298.5px;width:140px;height:1px;background:#17479f"></div>
<div style="left:277.8px;top:326.0px;width:700px;height:1px;background:#8f8f8f"></div>
<div style="left:137.8px;top:326.0px;width:140px;height:1px;background:#17479f"></div>
<div style="left:277.8px;top:353.5px;width:700px;height:1px;background:#8f8f8f"></div>
<div style="left:137.8px;top:353.5px;width:140px;height:1px;background:#17479f"></div>
<div style="left:277.8px;top:381.0px;width:700px;height:1px;background:#8f8f8f"></div>
<div style="left:137.8px;top:381.0px;width:140px;height:1px;background:#17479f"></div>
<div style="left:277.8px;top:409.0px;width:700px;height:1px;background:#8f8f8f"></div>
<div style="left:137.8px;top:409.0px;width:140px;height:1px;background:#17479f"></div>
<div style="left:277.8px;top:436.5px;width:700px;height:1px;background:#8f8f8f"></div>
<div style="left:137.8px;top:436.5px;width:140px;height:1px;background:#17479f"></div>
<div style="left:277.8px;top:464.5px;width:700px;height:1px;background:#8f8f8f"></div>
<div style="left:137.8px;top:464.5px;width:140px;height:1px;background:#17479f"></div>
<div style="left:277.8px;top:491.5px;width:700px;height:1px;background:#8f8f8f"></div>
<div style="left:137.8px;top:491.5px;width:140px;height:1px;background:#17479f"></div>
<div style="left:277.8px;top:519.0px;width:700px;height:1px;background:#8f8f8f"></div>
<div style="left:137.8px;top:519.0px;width:140px;height:1px;background:#2a3f66"></div>
<div style="left:277.3px;top:271px;width:1px;height:248.5px;background:#8f8f8f"></div>
<div style="left:417.3px;top:271px;width:1px;height:248.5px;background:#8f8f8f"></div>
<div style="left:557.3px;top:271px;width:1px;height:248.5px;background:#8f8f8f"></div>
<div style="left:697.3px;top:271px;width:1px;height:248.5px;background:#8f8f8f"></div>
<div style="left:837.3px;top:271px;width:1px;height:248.5px;background:#8f8f8f"></div>
<div style="left:137.3px;top:240.5px;width:841px;height:279.5px;border:1px solid #7a7a7a"></div>
<div style="left:137.3px;top:240.5px;width:141px;height:1.2px;background:#2d4f8a"></div>
<div style="left:137.8px;top:241.7px;width:140px;height:29.6px;border:1.4px solid #6b9ad8"></div><svg style="left:0;top:0" width="1024" height="576"><polygon points="271.3,59.2 303.2,111.2 285.9,111.2 285.9,209.5 255.5,209.5 255.5,111.2 237.6,111.2" fill="#1f5cc9"/></svg>
<svg style="left:284px;top:45px" width="9" height="12" viewBox="0 0 9 12"><path d="M1 1v8l2-2 1.6 3.2 1.2-.6-1.6-3.1h3z" fill="#f4f4f4" stroke="#666" stroke-width="0.7"/></svg>

</body></html>
